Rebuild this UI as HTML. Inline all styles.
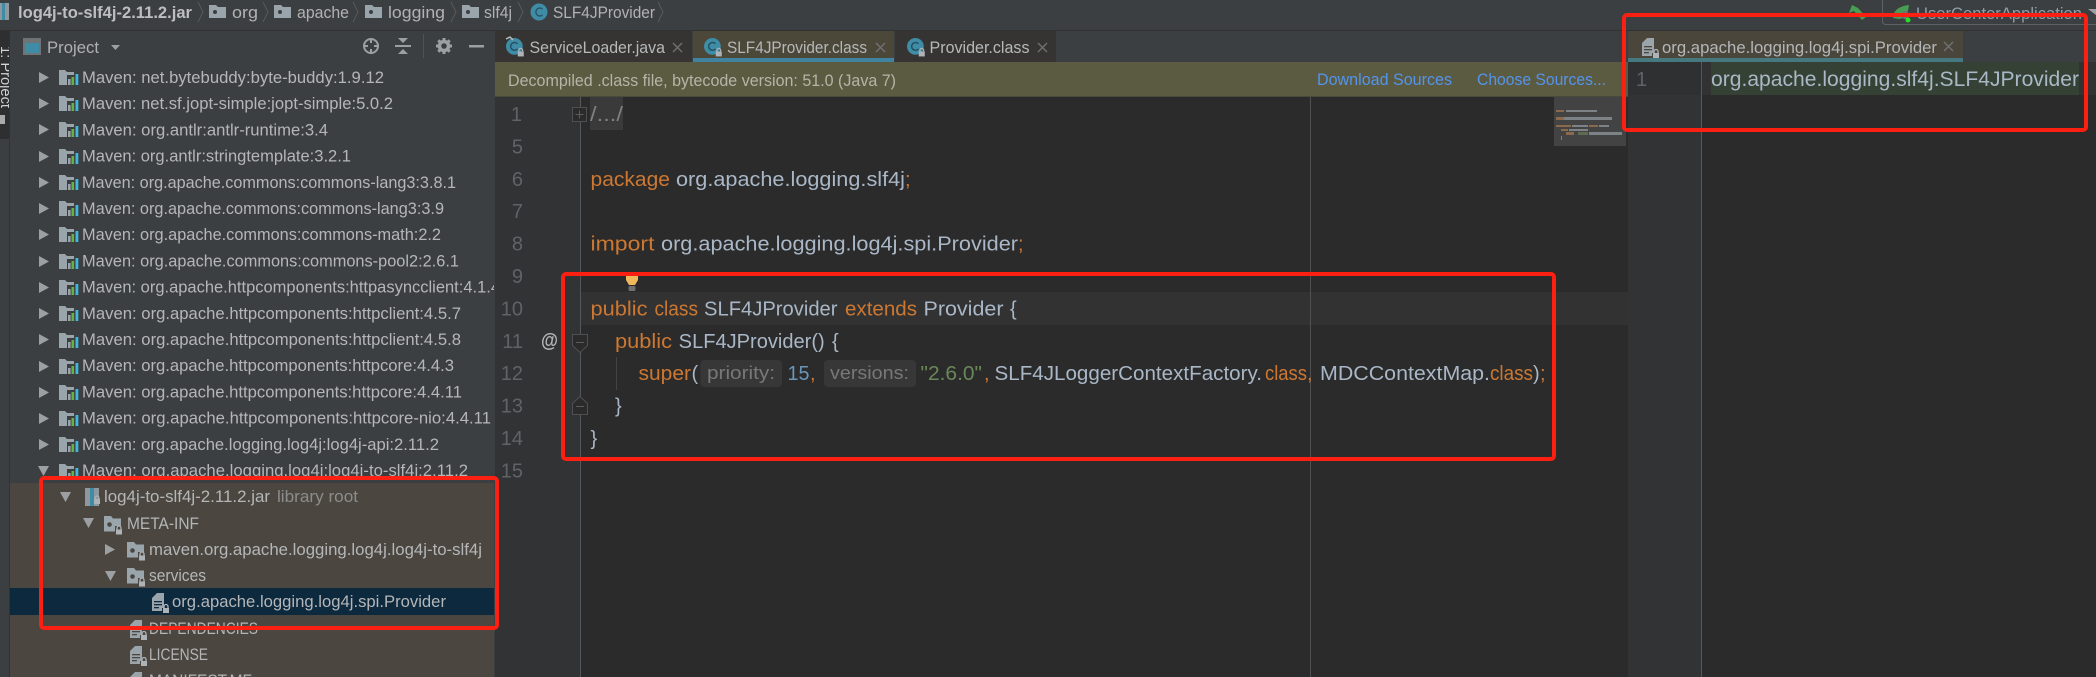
<!DOCTYPE html>
<html>
<head>
<meta charset="utf-8">
<style>
html,body{margin:0;padding:0;background:#3c3f41;width:2096px;height:677px;overflow:hidden}
svg{display:block;color:#4b4740}
text{font-family:"Liberation Sans",sans-serif;white-space:pre}
.t{font-size:17px;fill:#b4b6b8}
.b{font-size:16.5px;fill:#b0b2b4}
.c{font-size:20px;fill:#a9b7c6}
.k{font-size:20px;fill:#cc7832}
.n{font-size:20px;fill:#606366}
.h{font-size:18px;fill:#787878}
.tab{font-size:17px;fill:#b6b8ba}
</style>
</head>
<body>
<svg width="2096" height="677" viewBox="0 0 2096 677" xmlns="http://www.w3.org/2000/svg">
<defs>
<symbol id="lib" viewBox="0 0 20 16" width="20" height="16" overflow="visible">
  <path d="M0 1h6l2 2h7v13H0z" fill="#9aa4ab"/>
  <rect x="8" y="6" width="12" height="10" fill="#3c3f41"/>
  <rect x="9" y="10" width="2.600" height="6" fill="#9aa4ab"/>
  <rect x="12.500" y="8" width="2.600" height="8" fill="#62b543"/>
  <rect x="16.500" y="5" width="2.800" height="11" fill="#40b6e0"/>
</symbol>
<symbol id="fold" viewBox="0 0 19 19" width="19" height="19" overflow="visible">
  <path d="M0 0h7l2 2.500h8v13H0z" fill="#9aa4ab"/>
  <circle cx="5.500" cy="8.500" r="2.300" fill="#4b4740"/>
  <rect x="11" y="10" width="8" height="9" fill="#4b4740"/>
  <path d="M13 13.500v-1.500a2 2 0 0 1 4 0v1.500" fill="none" stroke="#aeb3b7" stroke-width="1.300"/>
  <rect x="12" y="13.500" width="6" height="5" fill="#aeb3b7"/>
</symbol>
<symbol id="file" viewBox="0 0 17 20" width="17" height="20" overflow="visible">
  <path d="M5 0h7v15h-2v3H0V5z" fill="#9aa4ab"/>
  <rect x="2" y="8" width="8" height="1.300" fill="currentColor"/>
  <rect x="2" y="11" width="8" height="1.300" fill="currentColor"/>
  <rect x="2" y="14" width="5" height="1.300" fill="currentColor"/>
  <path d="M12 15v-1.500a2 2 0 0 1 4 0v1.500" fill="none" stroke="#aeb3b7" stroke-width="1.300"/>
  <rect x="11" y="15" width="6" height="5" fill="#aeb3b7"/>
</symbol>
<symbol id="cls" viewBox="0 0 17 17" width="17" height="17" overflow="visible">
  <circle cx="7.500" cy="7.500" r="7.500" fill="#3f8ca6"/>
  <path d="M10.300 5.200a3.500 3.500 0 1 0 0 4.600" fill="none" stroke="#24505f" stroke-width="1.300"/>
  <path d="M11.500 12v-1a1.700 1.700 0 0 1 3.400 0v1" fill="none" stroke="#aeb3b7" stroke-width="1.100"/>
  <rect x="10.500" y="12" width="5.400" height="4.500" fill="#aeb3b7"/>
</symbol>
<symbol id="cf" viewBox="0 0 17 13" width="17" height="13" overflow="visible">
  <path d="M0 0h7l2 2h8v11H0z" fill="#9aa4ab"/>
  <circle cx="6" cy="7" r="2" fill="#3c3f41"/>
</symbol>
<clipPath id="treeclip"><rect x="10" y="62" width="484" height="615"/></clipPath>
<clipPath id="stripclip"><rect x="0" y="31" width="9" height="108"/></clipPath>
</defs>

<!-- base -->
<rect width="2096" height="677" fill="#3c3f41"/>
<rect x="0" y="31" width="9" height="108" fill="#2d2f31"/>
<rect x="9" y="31" width="1" height="646" fill="#323232"/>
<rect x="0" y="30" width="2096" height="1" fill="#323232"/>

<!-- breadcrumb -->
<rect x="0" y="3" width="9" height="17" fill="#8f989e"/>
<rect x="2" y="3" width="3" height="17" fill="#3f8ca6"/>
<text x="18" y="18" class="b" style="font-weight:700;fill:#bcbec0" textLength="174" lengthAdjust="spacingAndGlyphs">log4j-to-slf4j-2.11.2.jar</text>
<path d="M198 2l5 10-5 10M263 2l5 10-5 10M353 2l5 10-5 10M451 2l5 10-5 10M518 2l5 10-5 10M658 2l5 10-5 10" fill="none" stroke="#57595b" stroke-width="1"/>
<use href="#cf" x="209" y="5"/><text x="232" y="18" class="b" textLength="26" lengthAdjust="spacingAndGlyphs">org</text>
<use href="#cf" x="274" y="5"/><text x="297" y="18" class="b" textLength="52" lengthAdjust="spacingAndGlyphs">apache</text>
<use href="#cf" x="365" y="5"/><text x="388" y="18" class="b" textLength="57" lengthAdjust="spacingAndGlyphs">logging</text>
<use href="#cf" x="462" y="5"/><text x="484" y="18" class="b" textLength="28" lengthAdjust="spacingAndGlyphs">slf4j</text>
<circle cx="539" cy="12" r="8.500" fill="#3f8ca6"/>
<path d="M542.500 9a4 4 0 1 0 0 6" fill="none" stroke="#24505f" stroke-width="1.300"/>
<text x="553" y="18" class="b" textLength="102" lengthAdjust="spacingAndGlyphs">SLF4JProvider</text>

<!-- project header -->
<rect x="23" y="38" width="18" height="17" fill="#6e7376"/>
<rect x="25" y="43" width="14" height="10" fill="#3f8ca6"/>
<text x="47" y="53" class="t" textLength="52" lengthAdjust="spacingAndGlyphs" style="fill:#aeb0b2">Project</text>
<path d="M111 45h9l-4.500 5z" fill="#9da0a2"/>
<circle cx="371" cy="46" r="7" fill="none" stroke="#9da0a2" stroke-width="2"/>
<path d="M371 38v5M371 49v5M363 46h5M374 46h5" stroke="#9da0a2" stroke-width="2"/>
<path d="M395 46h16" stroke="#9da0a2" stroke-width="2"/>
<path d="M398 38h10l-5 5zM398 54h10l-5-5z" fill="#9da0a2"/>
<rect x="423" y="34" width="1" height="24" fill="#4e5254"/>
<circle cx="444" cy="46" r="4.500" fill="none" stroke="#9da0a2" stroke-width="3.500"/>
<path d="M444 38v4M444 50v4M436 46h4M448 46h4M438.300 40.300l2.800 2.800M446.900 48.900l2.800 2.800M449.700 40.300l-2.800 2.800M441.100 48.900l-2.800 2.800" stroke="#9da0a2" stroke-width="3"/>
<rect x="469" y="45" width="15" height="2.500" fill="#9da0a2"/>
<rect x="495" y="62" width="4" height="35" fill="#5b5b42"/>

<!-- library region -->
<rect x="10" y="483" width="484" height="194" fill="#4b4740"/>
<rect x="10" y="588" width="484" height="27" fill="#0d293e"/>

<!-- tree -->
<g clip-path="url(#treeclip)">
<g fill="#9da0a2">
<path d="M39 72l10 5.500-10 5.500z"/><path d="M39 98l10 5.500-10 5.500z"/><path d="M39 124l10 5.500-10 5.500z"/><path d="M39 151l10 5.500-10 5.500z"/><path d="M39 177l10 5.500-10 5.500z"/><path d="M39 203l10 5.500-10 5.500z"/><path d="M39 229l10 5.500-10 5.500z"/><path d="M39 256l10 5.500-10 5.500z"/><path d="M39 282l10 5.500-10 5.500z"/><path d="M39 308l10 5.500-10 5.500z"/><path d="M39 334l10 5.500-10 5.500z"/><path d="M39 361l10 5.500-10 5.500z"/><path d="M39 387l10 5.500-10 5.500z"/><path d="M39 413l10 5.500-10 5.500z"/><path d="M39 439l10 5.500-10 5.500z"/>
<path d="M38 466h11l-5.500 10z"/>
<path d="M60 492h11l-5.500 10z"/>
<path d="M83 518h11l-5.500 10z"/>
<path d="M105 544l10 5.500-10 5.500z"/>
<path d="M105 571h11l-5.500 10z"/>
</g>
<use href="#lib" x="59" y="69"/><use href="#lib" x="59" y="95"/><use href="#lib" x="59" y="121"/><use href="#lib" x="59" y="148"/><use href="#lib" x="59" y="174"/><use href="#lib" x="59" y="200"/><use href="#lib" x="59" y="226"/><use href="#lib" x="59" y="253"/><use href="#lib" x="59" y="279"/><use href="#lib" x="59" y="305"/><use href="#lib" x="59" y="332"/><use href="#lib" x="59" y="358"/><use href="#lib" x="59" y="384"/><use href="#lib" x="59" y="410"/><use href="#lib" x="59" y="436"/><use href="#lib" x="59" y="463"/>
<text x="82" y="83" class="t" textLength="302" lengthAdjust="spacingAndGlyphs">Maven: net.bytebuddy:byte-buddy:1.9.12</text>
<text x="82" y="109.200" class="t" textLength="311" lengthAdjust="spacingAndGlyphs">Maven: net.sf.jopt-simple:jopt-simple:5.0.2</text>
<text x="82" y="135.400" class="t" textLength="246" lengthAdjust="spacingAndGlyphs">Maven: org.antlr:antlr-runtime:3.4</text>
<text x="82" y="161.600" class="t" textLength="269" lengthAdjust="spacingAndGlyphs">Maven: org.antlr:stringtemplate:3.2.1</text>
<text x="82" y="187.800" class="t" textLength="374" lengthAdjust="spacingAndGlyphs">Maven: org.apache.commons:commons-lang3:3.8.1</text>
<text x="82" y="214" class="t" textLength="362" lengthAdjust="spacingAndGlyphs">Maven: org.apache.commons:commons-lang3:3.9</text>
<text x="82" y="240.200" class="t" textLength="359" lengthAdjust="spacingAndGlyphs">Maven: org.apache.commons:commons-math:2.2</text>
<text x="82" y="266.400" class="t" textLength="377" lengthAdjust="spacingAndGlyphs">Maven: org.apache.commons:commons-pool2:2.6.1</text>
<text x="82" y="292.600" class="t" textLength="418" lengthAdjust="spacingAndGlyphs">Maven: org.apache.httpcomponents:httpasyncclient:4.1.4</text>
<text x="82" y="318.800" class="t" textLength="379" lengthAdjust="spacingAndGlyphs">Maven: org.apache.httpcomponents:httpclient:4.5.7</text>
<text x="82" y="345" class="t" textLength="379" lengthAdjust="spacingAndGlyphs">Maven: org.apache.httpcomponents:httpclient:4.5.8</text>
<text x="82" y="371.200" class="t" textLength="372" lengthAdjust="spacingAndGlyphs">Maven: org.apache.httpcomponents:httpcore:4.4.3</text>
<text x="82" y="397.400" class="t" textLength="380" lengthAdjust="spacingAndGlyphs">Maven: org.apache.httpcomponents:httpcore:4.4.11</text>
<text x="82" y="423.600" class="t" textLength="409" lengthAdjust="spacingAndGlyphs">Maven: org.apache.httpcomponents:httpcore-nio:4.4.11</text>
<text x="82" y="449.800" class="t" textLength="357" lengthAdjust="spacingAndGlyphs">Maven: org.apache.logging.log4j:log4j-api:2.11.2</text>
<text x="82" y="476" class="t" textLength="386" lengthAdjust="spacingAndGlyphs">Maven: org.apache.logging.log4j:log4j-to-slf4j:2.11.2</text>

<!-- jar -->
<rect x="85" y="488" width="14" height="18" fill="#8f989e"/>
<rect x="90" y="488" width="4" height="18" fill="#3f8ca6"/>
<path d="M95 499v-1a2 2 0 0 1 4 0v1" fill="none" stroke="#aeb3b7" stroke-width="1.200"/>
<rect x="94" y="499" width="6" height="5" fill="#aeb3b7"/>
<text x="104" y="502.200" class="t" textLength="166" lengthAdjust="spacingAndGlyphs">log4j-to-slf4j-2.11.2.jar</text>
<text x="277" y="502.200" class="t" style="fill:#8c8c8c" textLength="81" lengthAdjust="spacingAndGlyphs">library root</text>
<use href="#fold" x="104" y="516"/>
<text x="127" y="529" class="t" textLength="72" lengthAdjust="spacingAndGlyphs">META-INF</text>
<use href="#fold" x="127" y="542"/>
<text x="149" y="555" class="t" textLength="333" lengthAdjust="spacingAndGlyphs">maven.org.apache.logging.log4j.log4j-to-slf4j</text>
<use href="#fold" x="127" y="568"/>
<text x="149" y="581" class="t" textLength="57" lengthAdjust="spacingAndGlyphs">services</text>
<use href="#file" x="152" y="593" style="color:#0d293e"/>
<text x="172" y="607" class="t" textLength="274" lengthAdjust="spacingAndGlyphs">org.apache.logging.log4j.spi.Provider</text>
<use href="#file" x="130" y="620"/>
<text x="149" y="634" class="t" textLength="109" lengthAdjust="spacingAndGlyphs">DEPENDENCIES</text>
<use href="#file" x="130" y="646"/>
<text x="149" y="660" class="t" textLength="59" lengthAdjust="spacingAndGlyphs">LICENSE</text>
<use href="#file" x="130" y="672"/>
<text x="149" y="686" class="t" textLength="103" lengthAdjust="spacingAndGlyphs">MANIFEST.MF</text>
</g>

<!-- left strip -->
<g clip-path="url(#stripclip)">
<text transform="translate(1,46) rotate(90)" font-size="15" style="fill:#d0d2d4" textLength="62" lengthAdjust="spacingAndGlyphs">1: Project</text>
<rect x="0" y="115" width="5" height="9" fill="#a8aaac"/>
</g>

<!-- tabs -->
<rect x="495" y="31" width="1133" height="31" fill="#3c3f41"/>
<rect x="495" y="31" width="197" height="31" fill="#353432"/>
<rect x="693" y="31" width="201" height="31" fill="#4b4739"/>
<rect x="895" y="31" width="161" height="31" fill="#353432"/>
<rect x="693" y="58" width="201" height="4" fill="#4083a0"/>
<use href="#cls" x="506" y="38" width="19" height="19"/>
<path d="M506 39l4-2 3 3" fill="none" stroke="#b8babc" stroke-width="1.500"/>
<text x="529.500" y="53" class="tab" textLength="135.500" lengthAdjust="spacingAndGlyphs">ServiceLoader.java</text>
<path d="M673 43l9 9M682 43l-9 9" stroke="#6f7173" stroke-width="1.400"/>
<use href="#cls" x="704" y="38" width="19" height="19"/>
<text x="727" y="53" class="tab" textLength="140" lengthAdjust="spacingAndGlyphs">SLF4JProvider.class</text>
<path d="M876 43l9 9M885 43l-9 9" stroke="#6f7173" stroke-width="1.400"/>
<use href="#cls" x="907" y="38" width="19" height="19"/>
<text x="929.500" y="53" class="tab" textLength="100" lengthAdjust="spacingAndGlyphs">Provider.class</text>
<path d="M1038 43l9 9M1047 43l-9 9" stroke="#6f7173" stroke-width="1.400"/>

<!-- banner -->
<rect x="495" y="62" width="1133" height="35" fill="#5b5b42"/>
<rect x="495" y="96" width="1133" height="1" fill="#4a4a3a"/>
<text x="508" y="86" class="tab" style="fill:#b4b5a8" textLength="388" lengthAdjust="spacingAndGlyphs">Decompiled .class file, bytecode version: 51.0 (Java 7)</text>
<text x="1317" y="85" class="tab" style="fill:#5394ec" textLength="135" lengthAdjust="spacingAndGlyphs">Download Sources</text>
<text x="1477" y="85" class="tab" style="fill:#5394ec" textLength="129" lengthAdjust="spacingAndGlyphs">Choose Sources...</text>

<!-- editor -->
<rect x="495" y="97" width="85" height="580" fill="#313335"/>
<rect x="580" y="97" width="1048" height="580" fill="#2b2b2b"/>
<rect x="580" y="97" width="1" height="580" fill="#555759"/>
<rect x="581" y="292" width="1047" height="33" fill="#323232"/>
<rect x="590" y="97" width="33" height="33" fill="#3a3a3a"/>
<rect x="1310" y="97" width="1" height="580" fill="#4e5052"/>
<rect x="616" y="357" width="1" height="33" fill="#414345"/>

<!-- line numbers -->
<text x="522" y="121" text-anchor="end" class="n">1</text>
<text x="523" y="153.400" text-anchor="end" class="n">5</text>
<text x="523" y="185.800" text-anchor="end" class="n">6</text>
<text x="523" y="218.200" text-anchor="end" class="n">7</text>
<text x="523" y="250.600" text-anchor="end" class="n">8</text>
<text x="523" y="283" text-anchor="end" class="n">9</text>
<text x="523" y="315.400" text-anchor="end" class="n">10</text>
<text x="523" y="347.800" text-anchor="end" class="n">11</text>
<text x="523" y="380.200" text-anchor="end" class="n">12</text>
<text x="523" y="412.600" text-anchor="end" class="n">13</text>
<text x="523" y="445" text-anchor="end" class="n">14</text>
<text x="523" y="477.400" text-anchor="end" class="n">15</text>

<!-- gutter marks -->
<rect x="572.500" y="107.500" width="14" height="14" fill="#2b2b2b" stroke="#4e5052"/>
<path d="M575.500 114.500h8M579.500 110.500v8" stroke="#5a5c5e" stroke-width="1"/>
<path d="M572.500 334.500h15v11l-7.500 7-7.500-7z" fill="#2b2b2b" stroke="#4e5052"/>
<path d="M576 342.500h8" stroke="#5a5c5e"/>
<path d="M572.500 414.500h15v-11l-7.500-7-7.500 7z" fill="#2b2b2b" stroke="#4e5052"/>
<path d="M576 406.500h8" stroke="#5a5c5e"/>
<text x="541" y="347" font-size="20" style="font-weight:700;fill:#b4b6b8" textLength="17" lengthAdjust="spacingAndGlyphs">@</text>
<path d="M626 276h12v4l-3 5h-6l-3-5z" fill="#f2b95c"/>
<rect x="628.500" y="286" width="7" height="5" rx="1.500" fill="#6e7072"/>

<!-- code -->
<text x="590" y="121" class="c" style="fill:#808080" textLength="33" lengthAdjust="spacingAndGlyphs">/.../</text>

<text x="590.500" y="185.800" class="k" textLength="79.500" lengthAdjust="spacingAndGlyphs">package</text>
<text x="676" y="185.800" class="c" textLength="229" lengthAdjust="spacingAndGlyphs">org.apache.logging.slf4j</text>
<text x="905" y="185.800" class="k">;</text>

<text x="590.500" y="250.600" class="k" textLength="64" lengthAdjust="spacingAndGlyphs">import</text>
<text x="661" y="250.600" class="c" textLength="357" lengthAdjust="spacingAndGlyphs">org.apache.logging.log4j.spi.Provider</text>
<text x="1018" y="250.600" class="k">;</text>

<text x="590.500" y="315.400" class="k" textLength="57" lengthAdjust="spacingAndGlyphs">public</text>
<text x="654.500" y="315.400" class="k" textLength="43.500" lengthAdjust="spacingAndGlyphs">class</text>
<text x="704" y="315.400" class="c" textLength="133.500" lengthAdjust="spacingAndGlyphs">SLF4JProvider</text>
<text x="845" y="315.400" class="k" textLength="72" lengthAdjust="spacingAndGlyphs">extends</text>
<text x="923.500" y="315.400" class="c" textLength="80" lengthAdjust="spacingAndGlyphs">Provider</text>
<text x="1010" y="315.400" class="c">{</text>

<text x="615" y="347.800" class="k" textLength="57" lengthAdjust="spacingAndGlyphs">public</text>
<text x="678.700" y="347.800" class="c" textLength="146" lengthAdjust="spacingAndGlyphs">SLF4JProvider()</text>
<text x="832" y="347.800" class="c">{</text>

<text x="638.500" y="380.200" class="k" textLength="52.500" lengthAdjust="spacingAndGlyphs">super</text>
<text x="691.500" y="380.200" class="c">(</text>
<rect x="700.500" y="360" width="81.500" height="27" rx="4" fill="#373737"/>
<text x="707" y="379" class="h" textLength="68" lengthAdjust="spacingAndGlyphs">priority:</text>
<text x="787.500" y="380.200" class="c" style="fill:#6897bb" textLength="22" lengthAdjust="spacingAndGlyphs">15</text>
<text x="810" y="380.200" class="k">,</text>
<rect x="824" y="360" width="92" height="27" rx="4" fill="#373737"/>
<text x="830" y="379" class="h" textLength="79" lengthAdjust="spacingAndGlyphs">versions:</text>
<text x="920.500" y="380.200" class="c" style="fill:#6a8759" textLength="61.500" lengthAdjust="spacingAndGlyphs">"2.6.0"</text>
<text x="984" y="380.200" class="k">,</text>
<text x="994.500" y="380.200" class="c" textLength="267.500" lengthAdjust="spacingAndGlyphs">SLF4JLoggerContextFactory.</text>
<text x="1265" y="380.200" class="k" textLength="42" lengthAdjust="spacingAndGlyphs">class</text>
<text x="1307" y="380.200" class="k">,</text>
<text x="1320" y="380.200" class="c" textLength="170" lengthAdjust="spacingAndGlyphs">MDCContextMap.</text>
<text x="1490" y="380.200" class="k" textLength="43" lengthAdjust="spacingAndGlyphs">class</text>
<text x="1533" y="380.200" class="c">)</text>
<text x="1540" y="380.200" class="k">;</text>

<text x="615" y="412.600" class="c">}</text>
<text x="590.500" y="445" class="c">}</text>

<!-- minimap -->
<rect x="1554" y="97" width="72" height="49" fill="#434343"/>
<g>
<rect x="1556" y="110" width="8" height="2" fill="#8a6a4a"/><rect x="1566" y="110" width="31" height="2" fill="#7d8286"/>
<rect x="1556" y="117" width="8" height="3" fill="#8a6a4a"/><rect x="1564" y="117" width="48" height="3" fill="#7d8286"/>
<rect x="1556" y="125" width="8" height="2" fill="#8a6a4a"/><rect x="1564" y="125" width="7" height="2" fill="#8a6a4a"/><rect x="1572" y="125" width="16" height="2" fill="#7d8286"/><rect x="1589" y="125" width="9" height="2" fill="#8a6a4a"/><rect x="1599" y="125" width="10" height="2" fill="#7d8286"/>
<rect x="1561" y="129" width="7" height="2" fill="#8a6a4a"/><rect x="1569" y="129" width="19" height="2" fill="#7d8286"/>
<rect x="1566" y="132" width="8" height="3" fill="#8a6a4a"/><rect x="1578" y="132" width="10" height="3" fill="#5e6a52"/><rect x="1589" y="132" width="33" height="3" fill="#7d8286"/>
<rect x="1561" y="136" width="1" height="4" fill="#7d8286"/>
</g>

<!-- right pane -->
<rect x="1628" y="31" width="468" height="31" fill="#3c3f41"/>
<rect x="1628" y="31" width="335" height="31" fill="#4b463c"/>
<rect x="1628" y="58" width="335" height="4" fill="#46787f"/>
<rect x="1628" y="62" width="73" height="615" fill="#313335"/>
<rect x="1701" y="62" width="395" height="615" fill="#2b2b2b"/>
<rect x="1701" y="62" width="1" height="615" fill="#555759"/>
<rect x="1628" y="62" width="73" height="33" fill="#2e3032"/>
<rect x="1702" y="62" width="394" height="33" fill="#323232"/>
<rect x="1711" y="62" width="368" height="33" fill="#344134"/>
<use href="#file" x="1642" y="38" style="color:#4b463c"/>
<text x="1662" y="53" class="tab" style="fill:#b4b6b8" textLength="275" lengthAdjust="spacingAndGlyphs">org.apache.logging.log4j.spi.Provider</text>
<path d="M1944 42l9 9M1953 42l-9 9" stroke="#6f7173" stroke-width="1.400"/>
<text x="1636" y="86" class="n">1</text>
<text x="1711" y="86" class="c" style="font-size:21px" textLength="368" lengthAdjust="spacingAndGlyphs">org.apache.logging.slf4j.SLF4JProvider</text>

<!-- top right -->
<path d="M1852 5l6 3 8 9-4 3-8-9-5 2z" fill="#499c54"/>
<rect x="1882.500" y="-3.500" width="230" height="28" rx="3" fill="none" stroke="#5e6164"/>
<path d="M1893 18c0-8 7-12 16-13-1 9-4 13-10 14z" fill="#499c54"/>
<circle cx="1905" cy="15" r="4" fill="#6f7376"/>
<circle cx="1908" cy="20" r="2.500" fill="#26e026"/>
<text x="1916" y="19" class="t" style="fill:#8e9da8" textLength="166" lengthAdjust="spacingAndGlyphs">UserCenterApplication</text>
<path d="M2088 9h8v6z" fill="#9da0a2"/>

<!-- red annotations -->
<g fill="none" stroke="#fb2012" stroke-width="4" stroke-linejoin="round">
<rect x="41" y="478" width="456" height="150" rx="3"/>
<rect x="563" y="274" width="991" height="185" rx="3"/>
<rect x="1624" y="15" width="462" height="115" rx="3"/>
</g>
</svg>
</body>
</html>
